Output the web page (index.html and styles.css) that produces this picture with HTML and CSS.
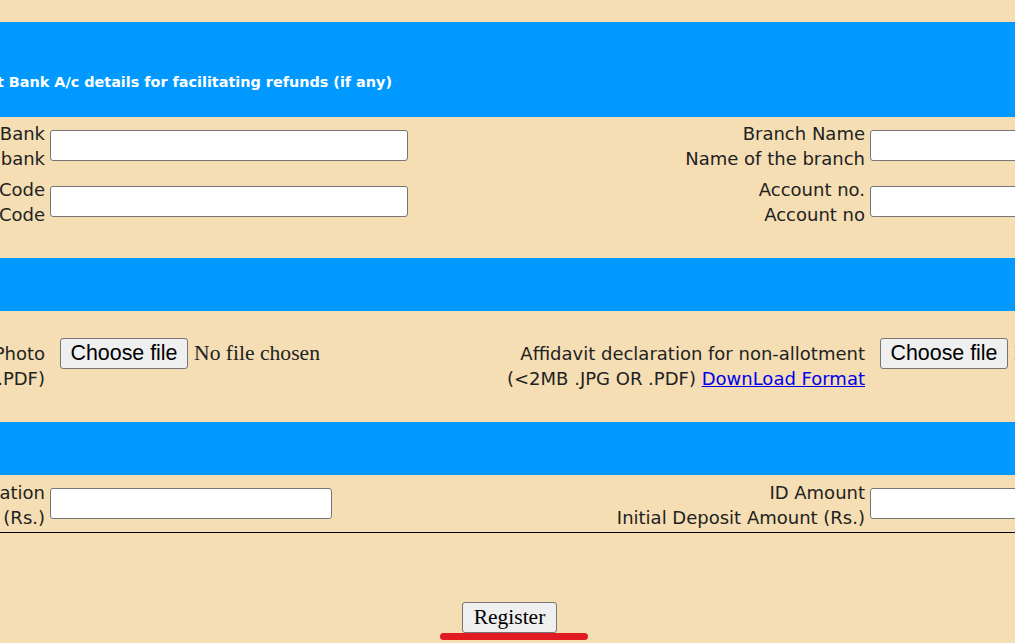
FILE: index.html
```html
<!DOCTYPE html>
<html lang="en">
<head>
<meta charset="utf-8">
<title>Registration</title>
<link rel="stylesheet" href="styles.css">
</head>
<body>
<div class="page">
  <div class="top-strip"></div>

  <div class="band band-title">
    <div class="title"><span>Applicant Bank A/c details for facilitating refunds (if any)</span></div>
  </div>

  <section class="sec sec-bank">
    <div class="row">
      <div class="lbl"><span>Name of Bank</span><span>Name of the bank</span></div>
      <div class="fld"><input type="text" class="in in-wide"></div>
      <div class="lbl"><span>Branch Name</span><span>Name of the branch</span></div>
      <div class="fld"><input type="text" class="in in-wide"></div>
    </div>
    <div class="row">
      <div class="lbl"><span>IFSC Code</span><span>IFSC Code</span></div>
      <div class="fld"><input type="text" class="in in-wide"></div>
      <div class="lbl"><span>Account no.</span><span>Account no</span></div>
      <div class="fld"><input type="text" class="in in-wide"></div>
    </div>
  </section>

  <div class="band band-plain"></div>

  <section class="sec sec-files">
    <div class="row row-top">
      <div class="lbl lbl-top"><span>Upload Photo</span><span>(&lt;2MB .JPG OR .PDF)</span></div>
      <div class="fld">
        <label class="file-pick"><input type="file" class="file-hidden"><span class="file-btn">Choose file</span><span class="file-name">No file chosen</span></label>
      </div>
      <div class="lbl lbl-top"><span>Affidavit declaration for non-allotment</span><span>(&lt;2MB .JPG OR .PDF) <a href="#" class="link">DownLoad Format</a></span></div>
      <div class="fld">
        <label class="file-pick"><input type="file" class="file-hidden"><span class="file-btn">Choose file</span><span class="file-name">No file chosen</span></label>
      </div>
    </div>
  </section>

  <div class="band band-plain"></div>

  <section class="sec sec-amount">
    <div class="row row-amount">
      <div class="lbl"><span>Registration</span><span>Registration Amount (Rs.)</span></div>
      <div class="fld"><input type="text" class="in in-short"></div>
      <div class="lbl"><span>ID Amount</span><span>Initial Deposit Amount (Rs.)</span></div>
      <div class="fld"><input type="text" class="in in-wide"></div>
    </div>
  </section>

  <div class="footer">
    <div class="reg-wrap">
      <button type="button" class="reg-btn">Register</button>
      <span class="mark"></span>
    </div>
  </div>
</div>
</body>
</html>
```

FILE: styles.css
```css
html {
  overflow: hidden;
  background: #f5deb3;
}

body {
  margin: 0;
  padding: 0;
  background: #f5deb3;
}

.page {
  width: 1019px;
  font-family: "DejaVu Sans", "Verdana", sans-serif;
  font-size: 18px;
  color: #222;
}

.top-strip {
  height: 22px;
  background: #f5deb3;
}

.band {
  background: #0099ff;
}

.band-title {
  height: 95px;
  box-sizing: border-box;
  padding-top: 50px;
}

.title {
  width: 392px;
  display: flex;
  justify-content: flex-end;
  white-space: nowrap;
  color: #fff;
  font-weight: bold;
  font-size: 14.4px;
  line-height: 20px;
}

.band-plain {
  height: 53px;
}

.sec {
  background: #f5deb3;
}

.sec-bank {
  padding-bottom: 29px;
}

.sec-files {
  padding-top: 27px;
  padding-bottom: 31px;
}

.sec-amount {
  border-bottom: 1px solid #000;
}

.row {
  display: grid;
  grid-template-columns: 47px 433px 387px 152px;
  height: 56px;
  align-items: center;
}

.row-top {
  height: 53px;
  align-items: start;
}

.row-amount {
  height: 57px;
}

.lbl {
  min-width: 0;
  display: flex;
  flex-direction: column;
  align-items: flex-end;
  padding-right: 2px;
  padding-top: 2px;
  white-space: nowrap;
  line-height: 25px;
}

.lbl-top {
  padding-top: 3px;
}

.fld {
  min-width: 0;
  display: flex;
  align-items: center;
  padding-left: 3px;
  white-space: nowrap;
}

.in {
  box-sizing: border-box;
  height: 31px;
  margin: 0;
  padding: 0 4px;
  border: 1px solid #767676;
  border-radius: 3px;
  background: #fff;
  flex: none;
}

.in-wide {
  width: 358px;
}

.in-short {
  width: 282px;
}

.file-pick {
  flex: none;
  display: flex;
  align-items: center;
  margin-left: 10px;
  cursor: pointer;
}

.file-hidden {
  display: none;
}

.file-btn {
  box-sizing: border-box;
  display: flex;
  align-items: center;
  height: 31px;
  padding: 0 9.5px;
  margin-right: 6px;
  font-family: "Liberation Sans", Arial, sans-serif;
  font-size: 21.4px;
  color: #000;
  background: #efefef;
  border: 1px solid #767676;
  border-radius: 3px;
}

.file-name {
  font-family: "Liberation Serif", "Times New Roman", serif;
  font-size: 21.6px;
  color: #222;
}

.link {
  color: #0000ee;
  text-decoration: underline;
}

.footer {
  display: flex;
  justify-content: center;
  padding-top: 69px;
  padding-bottom: 20px;
}

.reg-wrap {
  position: relative;
}

.reg-btn {
  box-sizing: border-box;
  width: 95px;
  height: 31px;
  margin: 0;
  padding: 0;
  font-family: "Liberation Serif", "Times New Roman", serif;
  font-size: 21.5px;
  color: #000;
  background: #efefef;
  border: 1px solid #767676;
  border-radius: 3px;
}

.mark {
  position: absolute;
  left: -22px;
  right: -31px;
  top: 31px;
  height: 7px;
  background: #e01b22;
  border-radius: 4px;
}
```
